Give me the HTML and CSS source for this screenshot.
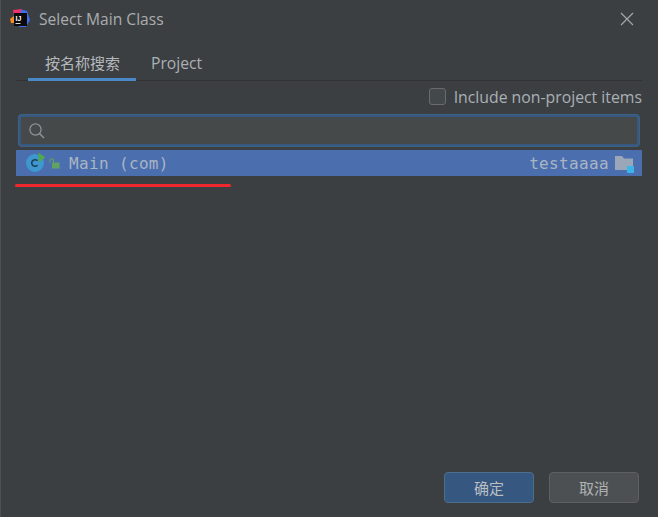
FILE: index.html
```html
<!DOCTYPE html>
<html lang="zh">
<head>
    <meta charset="UTF-8">
    <meta name="viewport" content="width=device-width, initial-scale=1.0">
    <title>Select Main Class</title>
    <link rel="stylesheet" href="styles.css">
</head>
<body>

    <div class="dialog">
        <!-- title bar -->
        <div class="titlebar">
            <svg class="app-logo" width="20" height="20" viewBox="0 0 20 20">
                <path d="M3 1 L12 0 L13 8 L5 15 Z" fill="#f0306a"/>
                <path d="M11 0.500 L17 2 L20 11 L16 18 L9 18 Z" fill="#3d6ef0"/>
                <path d="M0 10 L5 6 L6 14 L1 14 Z" fill="#f58a1f"/>
                <rect x="4" y="4" width="13" height="13" fill="#0b0b0d"/>
                <text class="logo-text" x="5.500" y="11.500">IJ</text>
                <rect x="5.500" y="14" width="5" height="1" fill="#d8d8d8"/>
            </svg>
            <span class="title">Select Main Class</span>
            <svg class="close" width="14" height="14" viewBox="0 0 14 14">
                <path d="M1 1 L13 13 M13 1 L1 13" stroke="#a4a7a9" stroke-width="1.200" fill="none"/>
            </svg>
        </div>

        <!-- tabs -->
        <div class="tabs">
            <div class="tab active">按名称搜索</div>
            <div class="tab">Project</div>
        </div>

        <div class="options">
            <span class="checkbox"></span>
            <span class="option-label">Include non-project items</span>
        </div>

        <div class="search">
            <svg width="18" height="18" viewBox="0 0 18 18">
                <circle cx="7.500" cy="7.500" r="5.600" stroke="#8d9194" stroke-width="1.300" fill="none"/>
                <path d="M11.600 11.600 L16 16" stroke="#8d9194" stroke-width="1.500"/>
            </svg>
        </div>

        <div class="row">
            <svg class="class-icon" width="20" height="20" viewBox="0 0 20 20">
                <circle cx="9" cy="11" r="9" fill="#3f97cf"/>
                <path d="M11.500 8.800 A3.300 3.300 0 1 0 11.500 13.200" stroke="#1f3f5c" stroke-width="1.600" fill="none"/>
                <path d="M12.500 0.500 L19.500 5.500 L12.500 10.500 Z" fill="#4fa84f"/>
            </svg>
            <svg class="lock-icon" width="11" height="11" viewBox="0 0 11 11">
                <rect x="3" y="4.500" width="7.500" height="6" fill="#62a362"/>
                <path d="M1 4.500 V2.500 A1.800 1.800 0 0 1 4.600 2.500 V4.500" stroke="#62a362" stroke-width="1.100" fill="none"/>
            </svg>
            <span class="row-name">Main (com)</span>
            <span class="row-module">testaaaa</span>
            <svg class="folder-icon" width="20" height="19" viewBox="0 0 20 19">
                <path d="M0 1 H7 L9 3.500 H18 V15 H0 Z" fill="#9aa7b8"/>
                <rect x="12" y="11" width="7" height="7" fill="#3db4e6"/>
            </svg>
        </div>

        <div class="spacer"></div>

        <div class="buttons">
            <button class="btn primary">确定</button>
            <button class="btn">取消</button>
        </div>

        <!-- red marker drawn over the screenshot -->
        <div class="marker"></div>
    </div>

</body>
</html>
```

FILE: styles.css
```css
html, body {
    margin: 0;
    height: 100%;
}
body {
    background: #3c3f41;
    font-family: "Open Sans", "Noto Sans CJK SC", sans-serif;
    overflow: hidden;
}
.dialog {
    position: relative;
    box-sizing: border-box;
    height: 517px;
    padding: 0 16px 0 15px;
    display: flex;
    flex-direction: column;
    border-left: 1px solid #4d5052;
}
.titlebar {
    height: 37px;
    display: flex;
    align-items: center;
    margin-left: -6px;
    margin-right: -1px;
}
.app-logo {
    margin-right: 9px;
}
.logo-text {
    font-family: "Liberation Sans", sans-serif;
    font-size: 7px;
    font-weight: bold;
    fill: #ffffff;
}
.title {
    color: #a9adb0;
    font-size: 15.600px;
    flex: 1;
}
.close {
    margin-right: 9px;
}
.tabs {
    display: flex;
    height: 44px;
    box-sizing: border-box;
    border-bottom: 1px solid #323232;
    padding: 13px 0 0 12px;
}
.tab {
    color: #a9b0b6;
    font-size: 15.700px;
    height: 31px;
    box-sizing: border-box;
    padding: 3px 15px 0;
    line-height: 20px;
}
.tab.active {
    border-bottom: 3px solid #4a88c7;
    color: #b4b9bd;
    font-size: 15px;
    padding: 3px 16px 0 17px;
}
.options {
    display: flex;
    align-items: center;
    justify-content: flex-end;
    height: 33px;
    box-sizing: border-box;
    padding-bottom: 2px;
}
.checkbox {
    width: 15px;
    height: 15px;
    border: 1px solid #6b6b6b;
    border-radius: 3px;
    background: #43494a;
    margin-right: 8px;
}
.option-label {
    color: #a9b0b6;
    font-size: 15.800px;
}
.search {
    height: 33px;
    margin: 0 2px;
    box-sizing: border-box;
    background: #45494a;
    border: 3px solid #38597f;
    border-radius: 4px;
    display: flex;
    align-items: center;
    padding-left: 7px;
    outline: 1px solid #3d6185;
    outline-offset: -1px;
}
.row {
    margin-top: 3px;
    height: 26px;
    background: #4b6eaf;
    display: flex;
    align-items: center;
    padding-left: 10px;
    font-family: "DejaVu Sans Mono", monospace;
    font-size: 16px;
    letter-spacing: 0.350px;
    color: #a9b5c4;
}
.class-icon {
    margin-top: -2px;
}
.lock-icon {
    margin: 1px 9px 0 3px;
}
.row-name {
    flex: 1;
}
.row-module {
    margin-right: 6px;
}
.folder-icon {
    margin-right: 7px;
    margin-top: 2px;
}
.spacer {
    flex: 1;
}
.buttons {
    display: flex;
    justify-content: flex-end;
    gap: 15px;
    padding: 0 3px 14px 0;
}
.btn {
    width: 90px;
    height: 31px;
    box-sizing: border-box;
    background: #4c5052;
    border: 1px solid #5e6060;
    border-radius: 4px;
    color: #b0b3b5;
    font-family: "Noto Sans CJK SC", sans-serif;
    font-size: 15px;
    padding: 0;
}
.btn.primary {
    background: #365880;
    border-color: #4c708c;
    color: #bbbfc2;
}
.marker {
    position: absolute;
    left: 14px;
    top: 184px;
    width: 216px;
    height: 3px;
    border-radius: 2px;
    background: #f0282d;
}
```
